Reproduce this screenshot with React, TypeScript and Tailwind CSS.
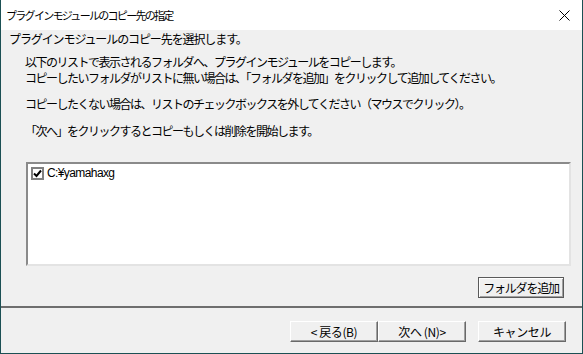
import React from "react";

const font = "[font-family:'Noto_Sans_CJK_JP','Noto_Sans',sans-serif]";

function Btn({ label, strong }: { label: string; strong?: boolean }) {
  return (
    <div
      className={`flex h-[21px] items-center justify-center whitespace-pre bg-[#f0f0f0] text-[12px] text-black ${
        strong
          ? "w-[86px] border border-[#5a5a5a] tracking-[-1.2px] shadow-[inset_1px_1px_#ffffff,inset_-1px_-1px_#a0a0a0]"
          : "w-[88px] border border-t-white border-l-white border-r-[#696969] border-b-[#696969] tracking-[-0.4px] shadow-[inset_-1px_-1px_#a0a0a0]"
      }`}
    >
      {label}
    </div>
  );
}

export default function App() {
  return (
    <div className={`flex h-[354px] w-[583px] flex-col border-x border-b border-[#1b5054] ${font} text-black`}>
      {/* Title bar */}
      <div className="flex h-[30px] shrink-0 items-center justify-between bg-white pl-[5px] pr-[12px]">
        <span className="text-[11px] leading-none tracking-[-1.7px]">プラグインモジュールのコピー先の指定</span>
        <svg width="11" height="11" viewBox="0 0 11 11">
          <path d="M0.5 0.5 L10.5 10.5 M10.5 0.5 L0.5 10.5" stroke="#000" strokeWidth="1" />
        </svg>
      </div>

      {/* Body */}
      <div className="flex flex-1 flex-col bg-[#f0f0f0] text-[12px] leading-[16px] tracking-[-1.5px]">
        <p className="mt-[1px] pl-[8px] tracking-[-1.1px]">プラグインモジュールのコピー先を選択します。</p>
        <div className="mt-[7px] pl-[24px]">
          <p>以下のリストで表示されるフォルダへ、プラグインモジュールをコピーします。</p>
          <p>コピーしたいフォルダがリストに無い場合は、「フォルダを追加」をクリックして追加してください。</p>
          <p className="mt-[10px]">コピーしたくない場合は、リストのチェックボックスを外してください（マウスでクリック）。</p>
          <p className="mt-[11px]">「次へ」をクリックするとコピーもしくは削除を開始します。</p>
        </div>

        {/* List box */}
        <div className="ml-[25px] mr-[11px] mt-[23px] h-[104px] border-2 border-t-[#8a8a8a] border-l-[#8a8a8a] border-r-[#e3e3e3] border-b-[#e3e3e3] bg-white px-[3px] pt-[1px]">
          <div className="flex items-center gap-[3px]">
            <div className="flex h-[13px] w-[13px] items-center justify-center border-2 border-[#808080] bg-white">
              <svg width="9" height="9" viewBox="0 0 9 9">
                <path d="M1 4.5 L3.5 7 L8 1.5" stroke="#000" strokeWidth="2" fill="none" />
              </svg>
            </div>
            <span className="tracking-[-0.6px] [font-family:'Liberation_Sans',sans-serif]">C:¥yamahaxg</span>
          </div>
        </div>

        {/* Add folder */}
        <div className="mt-[11px] flex justify-end pr-[18px]">
          <Btn label="フォルダを追加" strong />
        </div>

        <div className="mt-[8px] h-[2px] bg-[#6e6e6e]" />

        {/* Wizard buttons */}
        <div className="mt-[13px] flex pl-[289px]">
          <Btn label="< 戻る(B)" />
          <Btn label="次へ (N)>" />
          <div className="w-[12px]" />
          <Btn label="キャンセル" />
        </div>
      </div>
    </div>
  );
}
